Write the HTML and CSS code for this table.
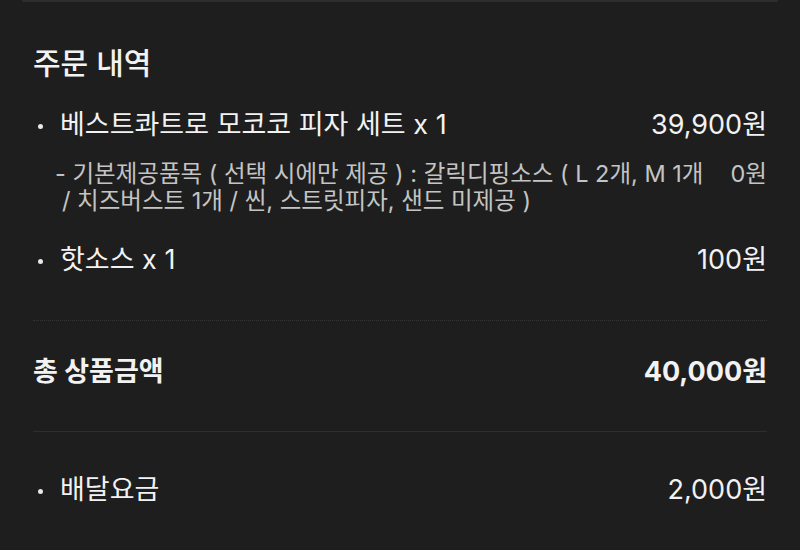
FILE: index.html
```html
<!DOCTYPE html>
<html lang="ko">
<head>
  <meta charset="UTF-8" />
  <meta name="viewport" content="width=device-width, initial-scale=1.0" />
  <title>주문 내역</title>
  <link rel="stylesheet" href="styles.css">
</head>
<body>
  <div class="top-rule"></div>
  <section class="order">
    <h2>주문 내역</h2>

    <div class="item">
      <span class="name">베스트콰트로 모코코 피자 세트 x 1</span>
      <span class="price">39,900원</span>
    </div>
    <div class="option">
      <span class="option-text">- 기본제공품목 ( 선택 시에만 제공 ) : 갈릭디핑소스 ( L 2개, M 1개 / 치즈버스트 1개 / 씬, 스트릿피자, 샌드 미제공 )</span>
      <span class="option-price">0원</span>
    </div>

    <div class="item">
      <span class="name">핫소스 x 1</span>
      <span class="price">100원</span>
    </div>
  </section>

  <div class="total">
    <span>총 상품금액</span>
    <span>40,000원</span>
  </div>

  <section class="fees">
    <div class="item">
      <span class="name">배달요금</span>
      <span class="price">2,000원</span>
    </div>
  </section>
</body>
</html>
```

FILE: styles.css
```css
body {
  font-family: Inter, "Noto Sans CJK KR", "Noto Sans", sans-serif;
  background: #1e1e1e;
  color: #f2f2f2;
  margin: 0;
  padding: 0 33px;
}
.top-rule {
  height: 2px;
  background: #2d2d2d;
  margin: 0 -11px;
}
.order {
  padding: 41px 0 40px;
  border-bottom: 1px dotted #343434;
}
h2 {
  font-size: 30px;
  font-weight: 500;
  margin: 0 0 22px;
  line-height: 40px;
}
.item {
  display: flex;
  justify-content: space-between;
  align-items: center;
  font-size: 27px;
  line-height: 40px;
}
.item .name {
  position: relative;
  padding-left: 27px;
}
.item .name::before {
  content: "";
  position: absolute;
  left: 5px;
  top: 19px;
  width: 5px;
  height: 5px;
  border-radius: 50%;
  background: #e8e8e8;
}
.option {
  display: flex;
  justify-content: space-between;
  gap: 22px;
  font-size: 23.5px;
  line-height: 27px;
  color: #c4c4c4;
  margin: 15px 0 26px;
}
.option-text {
  flex: 1;
  padding-left: 29px;
  text-indent: -7px;
  word-break: keep-all;
}
.total {
  display: flex;
  justify-content: space-between;
  font-size: 27px;
  font-weight: 700;
  line-height: 40px;
  padding: 31px 0 39px;
  border-bottom: 1px solid #2e2e2e;
}
.fees {
  padding-top: 38px;
}
```
